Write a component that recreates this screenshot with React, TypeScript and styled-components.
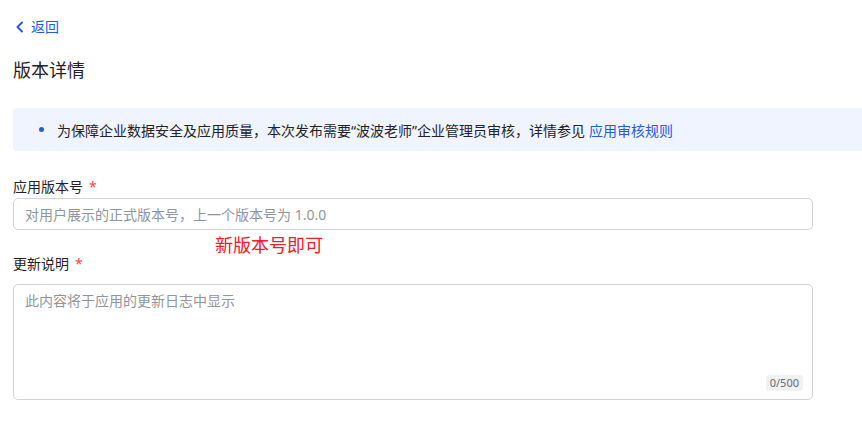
import styled, { createGlobalStyle } from "styled-components";

const GlobalStyle = createGlobalStyle`
  html, body {
    margin: 0;
    padding: 0;
    background: #fff;
    overflow: hidden;
  }
  body {
    font-family: "Noto Sans", "Noto Sans CJK SC", sans-serif;
    color: #1f2329;
  }
`;

const Page = styled.div`
  width: 900px;
  padding: 16px 0 0 13px;
  box-sizing: border-box;
`;

const BackLink = styled.a`
  display: inline-flex;
  align-items: center;
  gap: 6px;
  height: 22px;
  line-height: 22px;
  font-size: 14px;
  color: #245bdb;
  cursor: pointer;
`;

const Chevron = styled.svg`
  width: 10px;
  height: 12px;
  margin-left: 2px;
`;

const Title = styled.h1`
  margin: 19px 0 0;
  font-size: 18px;
  line-height: 26px;
  font-weight: 400;
  color: #1f2329;
`;

const Notice = styled.div`
  margin-top: 25px;
  height: 43px;
  display: flex;
  align-items: center;
  padding-left: 26px;
  background: #eff4fe;
  border-radius: 4px;
  font-size: 14px;
  color: #1f2329;
  white-space: nowrap;
`;

const Dot = styled.span`
  flex: none;
  width: 5px;
  height: 5px;
  border-radius: 50%;
  background: #245bdb;
  margin-right: 13px;
`;

const Link = styled.a`
  color: #245bdb;
  margin-left: 4px;
  cursor: pointer;
`;

const Field = styled.div<{ $top: number }>`
  position: relative;
  margin-top: ${(p) => p.$top}px;
  width: 800px;
`;

const Label = styled.div<{ $gap: number }>`
  font-size: 14px;
  line-height: 22px;
  color: #1f2329;
  margin-bottom: ${(p) => p.$gap}px;
`;

const Required = styled.span`
  color: #f54a45;
  margin-left: 6px;
`;

const Input = styled.input`
  display: block;
  width: 100%;
  height: 32px;
  box-sizing: border-box;
  border: 1px solid #d0d3d6;
  border-radius: 5px;
  padding: 0 11px;
  font-family: inherit;
  font-size: 14px;
  outline: none;
  &::placeholder {
    color: #8f959e;
  }
`;

const TextBox = styled.div`
  position: relative;
  height: 116px;
  box-sizing: border-box;
  border: 1px solid #d0d3d6;
  border-radius: 5px;
`;

const TextArea = styled.textarea`
  display: block;
  width: 100%;
  height: 100%;
  box-sizing: border-box;
  border: none;
  background: transparent;
  resize: none;
  padding: 5px 11px;
  font-family: inherit;
  font-size: 14px;
  line-height: 22px;
  outline: none;
  &::placeholder {
    color: #8f959e;
  }
`;

const Counter = styled.span`
  position: absolute;
  right: 9px;
  bottom: 8px;
  padding: 0 4px;
  height: 16px;
  line-height: 16px;
  border-radius: 3px;
  background: #f0f1f2;
  font-size: 11px;
  color: #646a73;
`;

const Annotation = styled.span`
  position: absolute;
  left: 202px;
  top: 56px;
  font-size: 18px;
  line-height: 26px;
  color: #e8202a;
  white-space: nowrap;
`;

export default function App() {
  return (
    <>
      <GlobalStyle />
      <Page>
        <BackLink>
          <Chevron viewBox="0 0 10 12">
            <polyline
              points="7,1.5 2.5,6 7,10.5"
              fill="none"
              stroke="currentColor"
              strokeWidth="2"
              strokeLinecap="round"
              strokeLinejoin="round"
            />
          </Chevron>
          返回
        </BackLink>
        <Title>版本详情</Title>
        <Notice>
          <Dot />
          为保障企业数据安全及应用质量，本次发布需要“波波老师”企业管理员审核，详情参见
          <Link>应用审核规则</Link>
        </Notice>
        <Field $top={25}>
          <Label $gap={0}>
            应用版本号<Required>*</Required>
          </Label>
          <Input placeholder="对用户展示的正式版本号，上一个版本号为 1.0.0" />
          <Annotation>新版本号即可</Annotation>
        </Field>
        <Field $top={23}>
          <Label $gap={9}>
            更新说明<Required>*</Required>
          </Label>
          <TextBox>
            <TextArea placeholder="此内容将于应用的更新日志中显示" />
            <Counter>0/500</Counter>
          </TextBox>
        </Field>
      </Page>
    </>
  );
}
